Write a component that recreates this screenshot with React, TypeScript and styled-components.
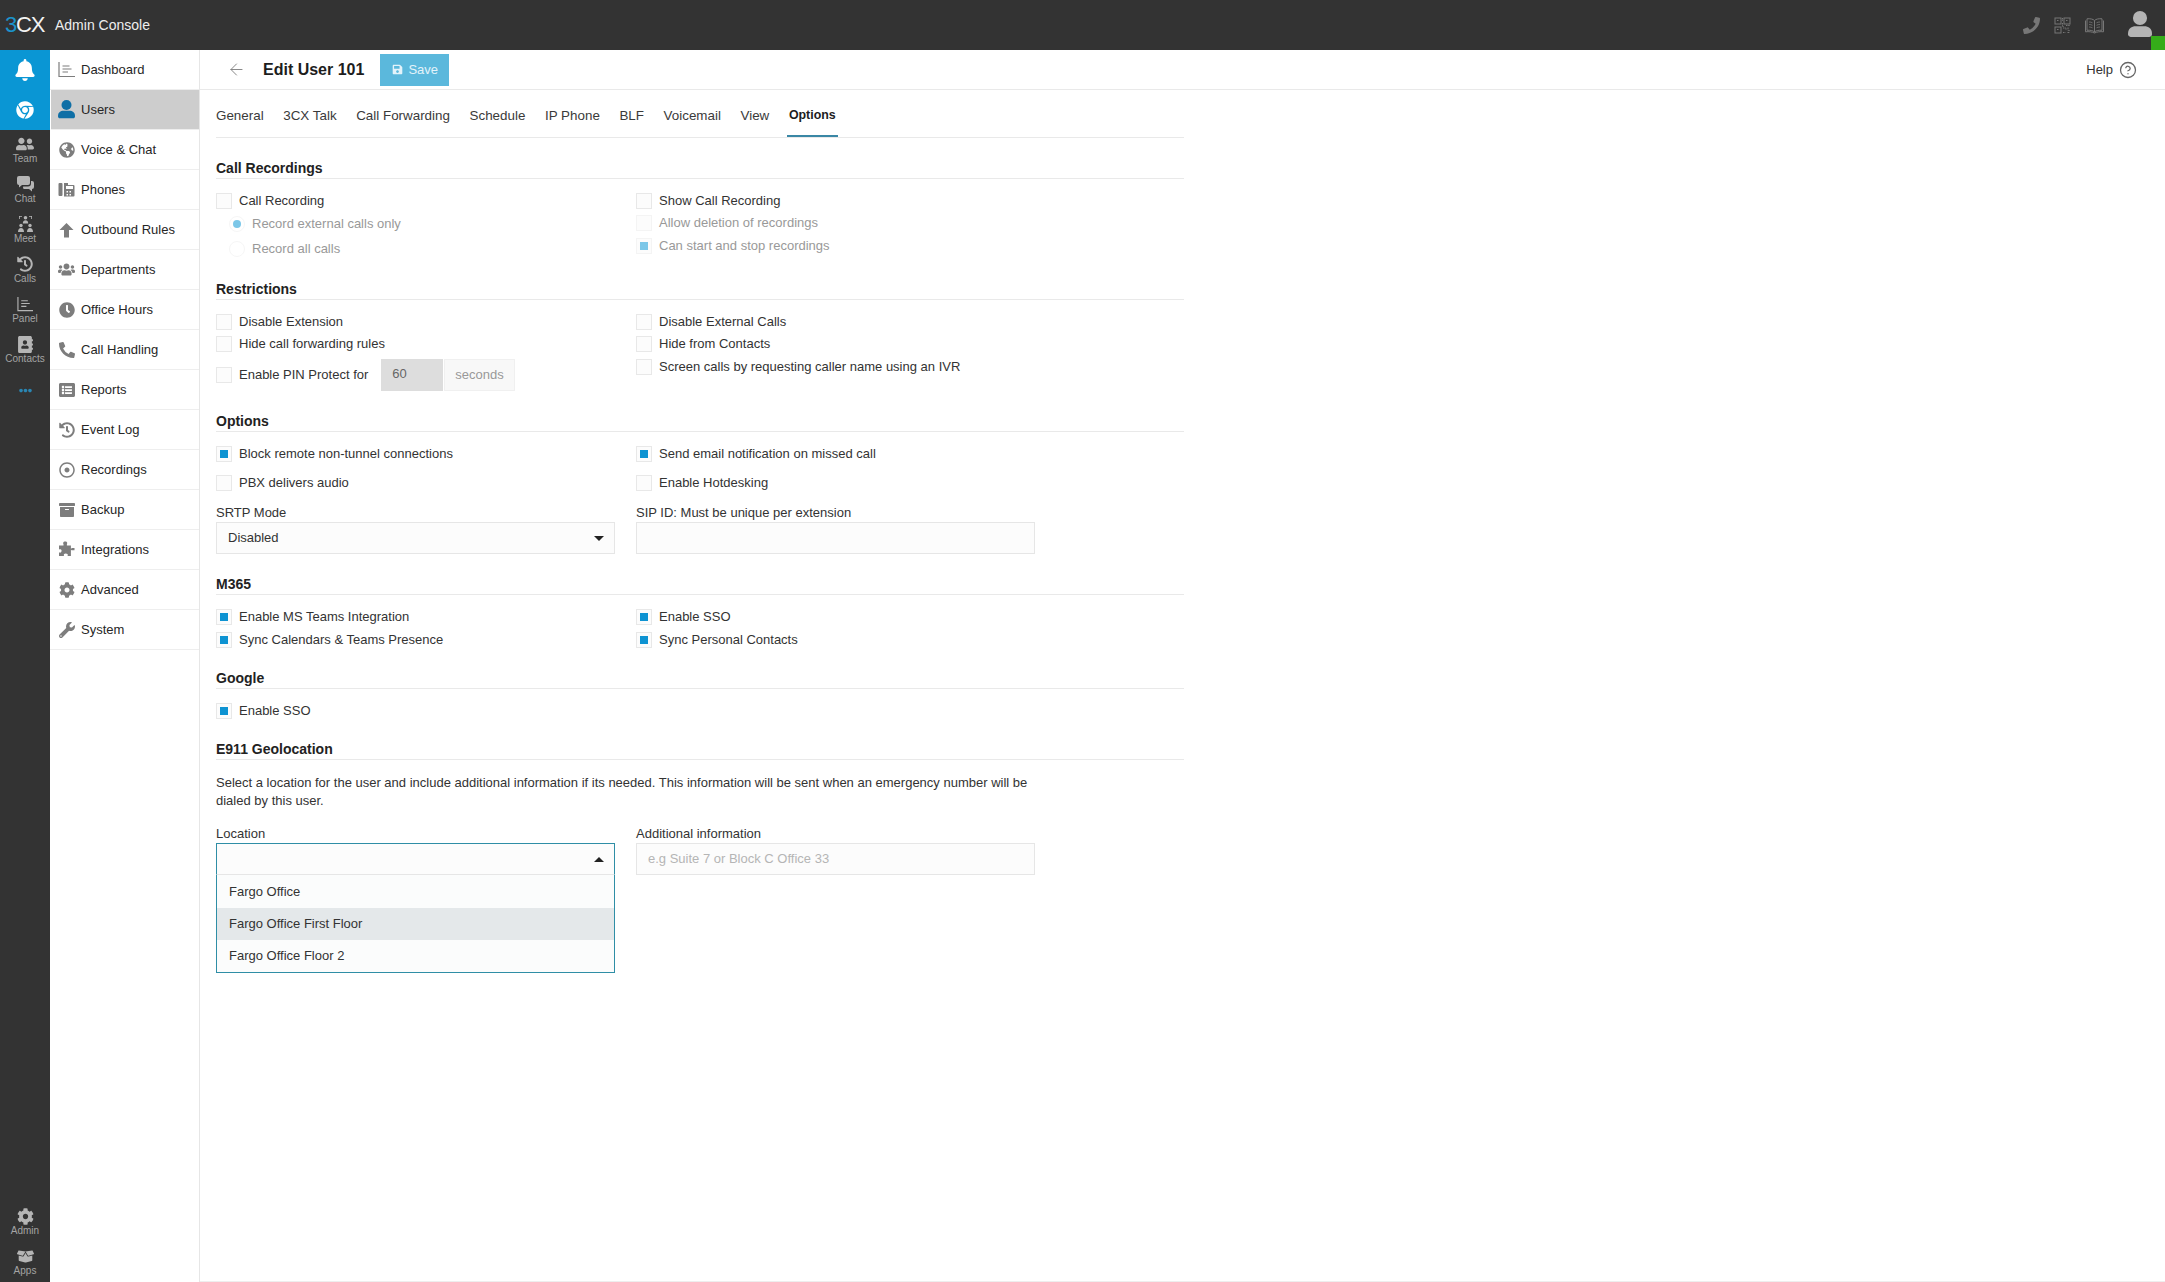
import React from "react";
import styled, { createGlobalStyle } from "styled-components";
import {
  FaAddressBook, FaArchive, FaBell, FaBoxOpen, FaChrome, FaClock, FaCog,
  FaEllipsisH, FaGlobeAmericas, FaHistory, FaListAlt, FaPhoneAlt,
  FaRegDotCircle, FaSave, FaUserFriends, FaUsers, FaWrench,
} from "react-icons/fa";
import { ArrowLeft, CircleHelp } from "lucide-react";

const GlobalStyle = createGlobalStyle`
  html, body { margin: 0; height: 100%; background: #fff; }
  body { font-family: "Liberation Sans", Arial, sans-serif; font-size: 13px; color: #333; }
  #root { height: 100%; }
  * { box-sizing: border-box; }
`;

const Page = styled.div`
  display: flex;
  flex-direction: column;
  height: 1282px;
  overflow: hidden;
`;

const TopBar = styled.header`
  display: flex;
  align-items: center;
  height: 50px;
  flex: none;
  background: #333;
  color: #eee;
  padding-left: 5px;
`;

const Logo = styled.div`
  font-size: 22px;
  letter-spacing: -1.2px;
  color: #f2f2f2;
  width: 50px;
  span { color: #1b93cc; }
`;

const AppTitle = styled.div`
  font-size: 14px;
  color: #eee;
`;

const TopIcons = styled.div`
  display: flex;
  align-items: center;
  gap: 14px;
  margin-left: auto;
  margin-right: 61px;
  color: #777;
`;

const Avatar = styled.div`
  position: absolute;
  right: 0;
  top: 0;
  width: 50px;
  height: 50px;
  color: #b4b4b4;
  svg { position: absolute; left: 13px; top: 11px; }
  &::after {
    content: "";
    position: absolute;
    right: 0;
    bottom: 0;
    width: 14px;
    height: 14px;
    background: #35ac19;
  }
`;

const Body = styled.div`
  display: flex;
  flex: 1;
  min-height: 0;
`;

const Rail = styled.nav`
  display: flex;
  flex-direction: column;
  width: 50px;
  flex: none;
  background: #333;
`;

const RailAlert = styled.div`
  display: flex;
  align-items: center;
  justify-content: center;
  height: 40px;
  background: #0a96d4;
  color: #fff;
`;

const RailItem = styled.div`
  display: flex;
  flex-direction: column;
  align-items: center;
  height: 40px;
  padding-top: 6px;
`;

const RailIcon = styled.span`
  display: flex;
  align-items: center;
  justify-content: center;
  height: 16px;
  color: #b5b5b5;
`;

const RailLabel = styled.span`
  font-size: 10px;
  line-height: 12px;
  margin-top: 1px;
  color: #a4a4a4;
`;

const RailMore = styled.div`
  display: flex;
  justify-content: center;
  align-items: center;
  height: 40px;
  color: #2a86b3;
`;

const RailBottom = styled.div`
  margin-top: auto;
`;

const SideNav = styled.nav`
  width: 150px;
  flex: none;
  border-right: 1px solid #e6e6e6;
  background: #fff;
`;

const NavItem = styled.div<{ $active?: boolean }>`
  display: flex;
  align-items: center;
  height: 40px;
  padding-left: ${(p) => (p.$active ? "7px" : "8px")};
  gap: 6px;
  border-bottom: 1px solid #eee;
  margin-left: ${(p) => (p.$active ? "1px" : "0")};
  background: ${(p) => (p.$active ? "#cdcdcd" : "#fff")};
  color: #262626;
`;

const NavIcon = styled.span<{ $active?: boolean }>`
  display: flex;
  align-items: center;
  justify-content: center;
  width: 17px;
  height: 18px;
  color: ${(p) => (p.$active ? "#0f6fa6" : "#7d7d7d")};
`;

const Main = styled.main`
  flex: 1;
  min-width: 0;
  border-bottom: 1px solid #eee;
`;

const Header = styled.div`
  display: flex;
  align-items: center;
  height: 40px;
  padding-left: 27px;
  border-bottom: 1px solid #e9e9e9;
`;

const BackArrow = styled.span`
  display: flex;
  color: #777;
  margin-right: 17px;
`;

const Title = styled.h1`
  margin: 0 16px 0 0;
  font-size: 16px;
  line-height: 20px;
  font-weight: 700;
  color: #1d1d1d;
`;

const SaveButton = styled.button`
  display: flex;
  align-items: center;
  gap: 5px;
  width: 69px;
  height: 32px;
  padding: 0 0 0 12px;
  border: 0;
  background: #5bb8dc;
  color: #e3f3fa;
  font: inherit;
`;

const HelpLink = styled.div`
  display: flex;
  align-items: center;
  gap: 6px;
  margin-left: auto;
  margin-right: 28px;
  color: #333;
  svg { color: #666; }
`;

const Form = styled.div`
  width: 968px;
  margin-left: 16px;
`;

const Tabs = styled.div`
  display: flex;
  gap: 19.6px;
  height: 48px;
  border-bottom: 1px solid #e9e9e9;
`;

const Tab = styled.div<{ $active?: boolean }>`
  height: 47px;
  line-height: 18px;
  padding-top: ${(p) => (p.$active ? "16px" : "17px")};
  color: ${(p) => (p.$active ? "#1d1d1d" : "#3a3a3a")};
  font-size: ${(p) => (p.$active ? "12.4px" : "13.4px")};
  font-weight: ${(p) => (p.$active ? 700 : 400)};
  ${(p) => p.$active && "margin: 0 -2px; padding-left: 2px; padding-right: 2px; border-bottom: 2px solid #3a87a5;"}
`;

const Section = styled.section`
  margin-top: 20px;
`;

const SectionTitle = styled.h2`
  margin: 0 0 14px;
  height: 21px;
  font-size: 14px;
  line-height: 20px;
  font-weight: 700;
  color: #222;
  border-bottom: 1px solid #e9e9e9;
`;

const Columns = styled.div<{ $top?: number }>`
  display: grid;
  grid-template-columns: 399px 399px;
  column-gap: 21px;
  align-items: start;
  margin-top: ${(p) => p.$top ?? 0}px;
`;

const Stack = styled.div<{ $bottom?: number }>`
  display: flex;
  flex-direction: column;
  padding-bottom: ${(p) => p.$bottom ?? 0}px;
`;

const Row = styled.label<{ $top?: number; $muted?: boolean }>`
  display: flex;
  align-items: center;
  gap: 7px;
  min-height: 16px;
  line-height: 16px;
  margin-top: ${(p) => p.$top ?? 0}px;
  color: ${(p) => (p.$muted ? "#999" : "#333")};
`;

const Box = styled.span<{ $on?: boolean; $muted?: boolean }>`
  display: flex;
  align-items: center;
  justify-content: center;
  width: 16px;
  height: 16px;
  flex: none;
  border: 1px solid ${(p) => (p.$muted ? "#f4f4f4" : "#e8e8e8")};
  background: #fcfcfc;
  &::after {
    content: "";
    display: ${(p) => (p.$on ? "block" : "none")};
    width: 8px;
    height: 8px;
    background: ${(p) => (p.$muted ? "#7cc7e8" : "#0e93d2")};
  }
`;

const Radio = styled.span<{ $on?: boolean }>`
  display: flex;
  align-items: center;
  justify-content: center;
  width: 16px;
  height: 16px;
  flex: none;
  margin-left: 13px;
  border-radius: 50%;
  border: 1px solid #f6f6f6;
  &::after {
    content: "";
    display: ${(p) => (p.$on ? "block" : "none")};
    width: 8px;
    height: 8px;
    border-radius: 50%;
    background: #7cc7e8;
  }
`;

const PinInput = styled.div`
  display: flex;
  align-items: center;
  height: 32px;
  margin-left: 6px;
`;

const PinValue = styled.div`
  width: 62px;
  height: 32px;
  line-height: 30px;
  padding-left: 11px;
  background: #ddd;
  color: #666;
  margin-right: 1px;
`;

const PinUnit = styled.div`
  width: 71px;
  height: 32px;
  line-height: 30px;
  padding-left: 10px;
  background: #f8f8f8;
  border: 1px solid #f0f0f0;
  color: #999;
`;

const Field = styled.div`
  display: flex;
  flex-direction: column;
`;

const FieldLabel = styled.div`
  height: 18px;
  line-height: 18px;
  color: #333;
`;

const Control = styled.div<{ $open?: boolean }>`
  position: relative;
  display: flex;
  align-items: center;
  height: 32px;
  padding: 0 11px 1px;
  background: #fcfcfc;
  border: 1px solid #e6e6e6;
  ${(p) => p.$open && "border-color: #2f8ea6; border-bottom-color: #e6e6e6;"}
  color: #333;
`;

const Placeholder = styled.span`
  color: #b5b5b5;
`;

const Caret = styled.span<{ $up?: boolean }>`
  position: absolute;
  right: 10px;
  top: 13px;
  width: 0;
  height: 0;
  border-left: 5px solid transparent;
  border-right: 5px solid transparent;
  border-top: ${(p) => (p.$up ? "0" : "5px solid #222")};
  border-bottom: ${(p) => (p.$up ? "5px solid #222" : "0")};
`;

const Menu = styled.div`
  position: absolute;
  left: -1px;
  right: -1px;
  top: 31px;
  height: 98px;
  padding-top: 1px;
  background: #fbfcfc;
  border: 1px solid #2f8ea6;
  border-top: 0;
`;

const MenuItem = styled.div<{ $hover?: boolean }>`
  height: 32px;
  line-height: 32px;
  padding-left: 12px;
  background: ${(p) => (p.$hover ? "#e4e8ea" : "transparent")};
  color: #333;
`;

const Note = styled.p`
  margin: 0 0 15px;
  width: 815px;
  line-height: 18px;
  color: #333;
`;

const DashIcon = ({ size = 17 }: { size?: number }) => (
  <svg width={size} height={size} viewBox="0 0 17 17" fill="none" stroke="currentColor" strokeWidth="1.2">
    <path d="M1 1v14.5h16" />
    <path d="M4.5 5h7M4.5 8h9M4.5 11h5.5" />
  </svg>
);

const MeetIcon = () => (
  <svg width="17" height="18" viewBox="0 0 17 18" fill="currentColor">
    <path d="M2 4V1h3v.8H2.8V4zM12 1h3v3h-.8V1.8H12z" />
    <circle cx="8.5" cy="2.8" r="1.8" />
    <path d="M5.8 8.5c0-2.2 1.2-3.2 2.7-3.2s2.7 1 2.7 3.2z" />
    <circle cx="4" cy="10.5" r="1.7" />
    <path d="M1 17c0-2.6 1.3-4 3-4s3 1.4 3 4z" />
    <circle cx="13" cy="10.5" r="1.7" />
    <path d="M10 17c0-2.6 1.3-4 3-4s3 1.4 3 4z" />
  </svg>
);

const ChatIcon = () => (
  <svg width="17" height="16" viewBox="0 0 17 16" fill="currentColor">
    <path d="M2 0h9a2 2 0 0 1 2 2v5a2 2 0 0 1-2 2H5l-3 2.5V9a2 2 0 0 1-2-2V2a2 2 0 0 1 2-2z" />
    <path d="M14 5h1a2 2 0 0 1 2 2v4a2 2 0 0 1-2 2v2.5L12 13H8a2 2 0 0 1-1.8-2.6H11a3 3 0 0 0 3-3z" />
  </svg>
);

const UserIcon = ({ size = 17 }: { size?: number }) => (
  <svg width={size} height={size * 1.08} viewBox="0 0 17 18.4" fill="currentColor">
    <circle cx="8.5" cy="5" r="5" />
    <path d="M0 16c0-3.6 2.6-5.2 5.4-5.2h6.2c2.800 0 5.400 1.600 5.400 5.200v.6c0 1-.8 1.800-1.800 1.800H1.800c-1 0-1.800-.8-1.800-1.800z" />
  </svg>
);

const DeskPhoneIcon = () => (
  <svg width="17" height="16" viewBox="0 0 17 16" fill="currentColor" fillRule="evenodd">
    <path d="M1.500 1h2a1 1 0 0 1 1 1v11a1 1 0 0 1-1 1h-2a1 1 0 0 1-1-1V2a1 1 0 0 1 1-1z" />
    <path d="M6 1h4v2h5.500a1 1 0 0 1 1 1v9.500a1 1 0 0 1-1 1H6zM8 4v3h7V4zM8.500 9v1.500H10V9zm3 0v1.500H13V9zM8.500 12v1.500H10V12zm3 0v1.500H13V12z" />
  </svg>
);

const ArrowUpIcon = () => (
  <svg width="15" height="16" viewBox="0 0 15 16" fill="currentColor">
    <polygon points="7.500,1 14.500,8 10,8 10,15.500 5,15.500 5,8 0.500,8" />
  </svg>
);

const PuzzleIcon = () => (
  <svg width="17" height="17" viewBox="0 0 17 17" fill="currentColor">
    <path d="M5.500 4.500V3.200c-.6-.8-.6-2.700 1.700-2.700s2.300 1.900 1.700 2.700v1.300h4v3.200c.6-.5 1.100-.7 1.600-.6h2v2.200h-2c-.5.100-1 0-1.600-.5v6.200H9.500c.4-.6.500-1.400-.1-2-.9-.8-2.500-.8-3.300.1-.5.600-.5 1.300 0 1.900H1v-3.700c.6.500 1.500.5 2 0 .8-.8.800-2.100 0-2.800-.6-.5-1.400-.4-2 0V4.500z" />
  </svg>
);

const QrIcon = () => (
  <svg width="17" height="17" viewBox="0 0 17 17" fill="none" stroke="currentColor" strokeWidth="1">
    <rect x="1" y="1" width="6" height="6" />
    <rect x="10" y="1" width="6" height="6" />
    <rect x="1" y="10" width="6" height="6" />
    <path d="M3 3.500h2M12 3.500h2M3 12.500h2M8.500 1v3M8.500 6v3.500H10M12 8.500h4M9 11h3v2M14 10.500v3h2M9 15.500h2.500M13.500 15.500H16" strokeDasharray="1.500 .7" />
  </svg>
);

const BookIcon = () => (
  <svg width="19" height="17" viewBox="0 0 19 17" fill="none" stroke="currentColor" strokeWidth="1">
    <path d="M9.500 3.500C8 2 5 1.500 2 1.800v11.500c3-.3 6 .2 7.500 1.700 1.500-1.500 4.500-2 7.500-1.700V1.800c-3-.3-6 .2-7.500 1.700zM9.500 3.500V15" />
    <path d="M.5 3.500v11.300c3.500-.4 6.500 0 9 1.200 2.500-1.200 5.500-1.600 9-1.200V3.500" />
    <path d="M4 5c1.300 0 2.500.2 3.500 .8M4 7.500c1.300 0 2.500.2 3.500 .8M4 10c1.300 0 2.500.2 3.500 .8M15 5c-1.300 0-2.500.2-3.500.8M15 7.500c-1.300 0-2.500.2-3.500.8M15 10c-1.300 0-2.500.2-3.500.8" strokeWidth=".8" />
  </svg>
);

const railItems = [
  { label: "Team", icon: <FaUserFriends size={18} /> },
  { label: "Chat", icon: <ChatIcon /> },
  { label: "Meet", icon: <MeetIcon /> },
  { label: "Calls", icon: <FaHistory size={16} /> },
  { label: "Panel", icon: <DashIcon size={16} /> },
  { label: "Contacts", icon: <FaAddressBook size={17} /> },
];

const navItems = [
  { label: "Dashboard", icon: <DashIcon /> },
  { label: "Users", icon: <UserIcon />, active: true },
  { label: "Voice & Chat", icon: <FaGlobeAmericas size={16} /> },
  { label: "Phones", icon: <DeskPhoneIcon /> },
  { label: "Outbound Rules", icon: <ArrowUpIcon /> },
  { label: "Departments", icon: <FaUsers size={17} /> },
  { label: "Office Hours", icon: <FaClock size={16} /> },
  { label: "Call Handling", icon: <FaPhoneAlt size={16} /> },
  { label: "Reports", icon: <FaListAlt size={16} /> },
  { label: "Event Log", icon: <FaHistory size={16} /> },
  { label: "Recordings", icon: <FaRegDotCircle size={16} /> },
  { label: "Backup", icon: <FaArchive size={16} /> },
  { label: "Integrations", icon: <PuzzleIcon /> },
  { label: "Advanced", icon: <FaCog size={16} /> },
  { label: "System", icon: <FaWrench size={16} /> },
];

const tabs = ["General", "3CX Talk", "Call Forwarding", "Schedule", "IP Phone", "BLF", "Voicemail", "View", "Options"];

const Check = ({ label, on, muted, top }: { label: string; on?: boolean; muted?: boolean; top?: number }) => (
  <Row $top={top} $muted={muted}>
    <Box $on={on} $muted={muted} />
    {label}
  </Row>
);

export default function App() {
  return (
    <Page>
      <GlobalStyle />
      <TopBar>
        <Logo>
          <span>3</span>CX
        </Logo>
        <AppTitle>Admin Console</AppTitle>
        <TopIcons>
          <FaPhoneAlt size={17} style={{ transform: "scaleX(-1)" }} />
          <QrIcon />
          <BookIcon />
        </TopIcons>
        <Avatar>
          <UserIcon size={24} />
        </Avatar>
      </TopBar>
      <Body>
        <Rail>
          <RailAlert>
            <FaBell size={22} />
          </RailAlert>
          <RailAlert>
            <FaChrome size={18} />
          </RailAlert>
          {railItems.map((item) => (
            <RailItem key={item.label}>
              <RailIcon>{item.icon}</RailIcon>
              <RailLabel>{item.label}</RailLabel>
            </RailItem>
          ))}
          <RailMore>
            <FaEllipsisH size={13} />
          </RailMore>
          <RailBottom>
            <RailItem>
              <RailIcon>
                <FaCog size={17} />
              </RailIcon>
              <RailLabel>Admin</RailLabel>
            </RailItem>
            <RailItem>
              <RailIcon>
                <FaBoxOpen size={17} />
              </RailIcon>
              <RailLabel>Apps</RailLabel>
            </RailItem>
          </RailBottom>
        </Rail>
        <SideNav>
          {navItems.map((item) => (
            <NavItem key={item.label} $active={item.active}>
              <NavIcon $active={item.active}>{item.icon}</NavIcon>
              {item.label}
            </NavItem>
          ))}
        </SideNav>
        <Main>
          <Header>
            <BackArrow>
              <ArrowLeft size={19} strokeWidth={1.1} />
            </BackArrow>
            <Title>Edit User 101</Title>
            <SaveButton>
              <FaSave size={11} />
              Save
            </SaveButton>
            <HelpLink>
              Help
              <CircleHelp size={18} strokeWidth={1.7} />
            </HelpLink>
          </Header>
          <Form>
            <Tabs>
              {tabs.map((t) => (
                <Tab key={t} $active={t === "Options"}>
                  {t}
                </Tab>
              ))}
            </Tabs>

            <Section>
              <SectionTitle>Call Recordings</SectionTitle>
              <Columns>
                <Stack $bottom={2}>
                  <Check label="Call Recording" />
                  <Row $top={7} $muted>
                    <Radio $on />
                    Record external calls only
                  </Row>
                  <Row $top={9} $muted>
                    <Radio />
                    Record all calls
                  </Row>
                </Stack>
                <Stack>
                  <Check label="Show Call Recording" />
                  <Check label="Allow deletion of recordings" muted top={6} />
                  <Check label="Can start and stop recordings" on muted top={7} />
                </Stack>
              </Columns>
            </Section>

            <Section>
              <SectionTitle>Restrictions</SectionTitle>
              <Columns>
                <Stack>
                  <Check label="Disable Extension" />
                  <Check label="Hide call forwarding rules" top={6} />
                  <Row $top={7}>
                    <Box />
                    Enable PIN Protect for
                    <PinInput>
                      <PinValue>60</PinValue>
                      <PinUnit>seconds</PinUnit>
                    </PinInput>
                  </Row>
                </Stack>
                <Stack>
                  <Check label="Disable External Calls" />
                  <Check label="Hide from Contacts" top={6} />
                  <Check label="Screen calls by requesting caller name using an IVR" top={7} />
                </Stack>
              </Columns>
            </Section>

            <Section>
              <SectionTitle>Options</SectionTitle>
              <Columns>
                <Stack>
                  <Check label="Block remote non-tunnel connections" on />
                  <Check label="PBX delivers audio" top={13} />
                </Stack>
                <Stack>
                  <Check label="Send email notification on missed call" on />
                  <Check label="Enable Hotdesking" top={13} />
                </Stack>
              </Columns>
              <Columns $top={13}>
                <Field>
                  <FieldLabel>SRTP Mode</FieldLabel>
                  <Control>
                    Disabled
                    <Caret />
                  </Control>
                </Field>
                <Field>
                  <FieldLabel>SIP ID: Must be unique per extension</FieldLabel>
                  <Control />
                </Field>
              </Columns>
            </Section>

            <Section>
              <SectionTitle>M365</SectionTitle>
              <Columns>
                <Stack>
                  <Check label="Enable MS Teams Integration" on />
                  <Check label="Sync Calendars & Teams Presence" on top={7} />
                </Stack>
                <Stack>
                  <Check label="Enable SSO" on />
                  <Check label="Sync Personal Contacts" on top={7} />
                </Stack>
              </Columns>
            </Section>

            <Section>
              <SectionTitle>Google</SectionTitle>
              <Check label="Enable SSO" on />
            </Section>

            <Section>
              <SectionTitle>E911 Geolocation</SectionTitle>
              <Note>
                Select a location for the user and include additional information if its needed. This information will
                be sent when an emergency number will be dialed by this user.
              </Note>
              <Columns>
                <Field>
                  <FieldLabel>Location</FieldLabel>
                  <Control $open>
                    <Caret $up />
                    <Menu>
                      <MenuItem>Fargo Office</MenuItem>
                      <MenuItem $hover>Fargo Office First Floor</MenuItem>
                      <MenuItem>Fargo Office Floor 2</MenuItem>
                    </Menu>
                  </Control>
                </Field>
                <Field>
                  <FieldLabel>Additional information</FieldLabel>
                  <Control>
                    <Placeholder>e.g Suite 7 or Block C Office 33</Placeholder>
                  </Control>
                </Field>
              </Columns>
            </Section>
          </Form>
        </Main>
      </Body>
    </Page>
  );
}
